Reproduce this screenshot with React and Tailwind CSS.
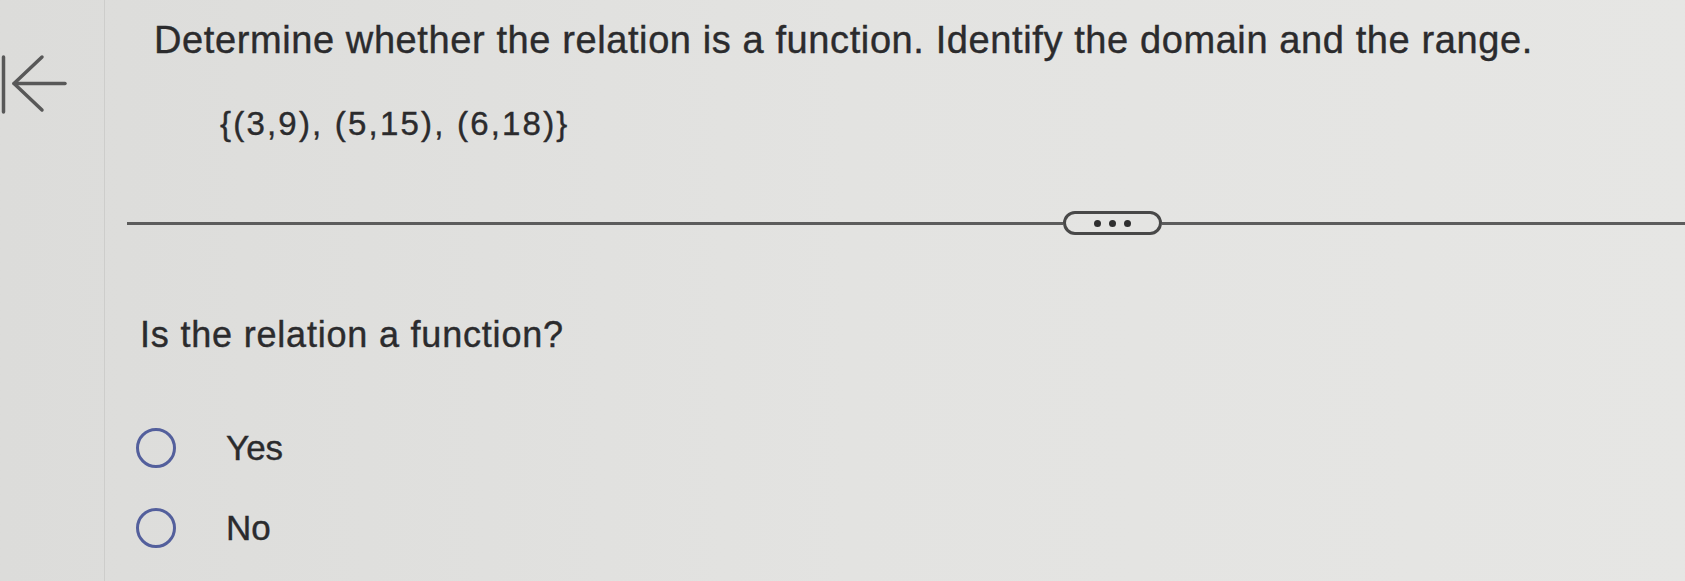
import React from "react"

function BackIcon() {
  return (
    <svg width="70" height="60" viewBox="0 0 70 60" fill="none" stroke="#585858" strokeWidth="3.5" strokeLinecap="round">
      {/* bar */}
      <line x1="3.5" y1="3" x2="3.5" y2="58" />
      {/* arrow */}
      <line x1="14" y1="29.5" x2="65" y2="29.5" />
      <polyline points="42,3 14,29.5 42,56" strokeLinejoin="round" />
    </svg>
  )
}

function Radio({ label }) {
  return (
    <div className="flex items-center h-[40px] -ml-[4px] gap-[50px]">
      <span className="w-[40px] h-[40px] rounded-full border-[3.5px] border-[#535f9c] shrink-0" />
      <span className="text-[35px] leading-[40px] [-webkit-text-stroke:0.4px_#2b2b2d]">{label}</span>
    </div>
  )
}

export default function App() {
  return (
    <div
      className="w-full h-[581px] flex overflow-hidden bg-linear-to-r from-[#dcdcda] via-[#e3e3e1] to-[#e6e6e4] text-[#2b2b2d]"
      style={{ fontFamily: '"Liberation Sans", Arial, sans-serif' }}
    >
      {/* Left rail */}
      <div className="w-[105px] shrink-0 border-r border-[#cdcdcb] pt-[54px]">
        <BackIcon />
      </div>

      {/* Question */}
      <div className="flex-1 flex flex-col pt-[20px] pl-[35px]">
        <h1 className="ml-[14px] text-[38px] leading-[40px] tracking-[0.6px] whitespace-nowrap font-normal [-webkit-text-stroke:0.4px_#2b2b2d]">
          Determine whether the relation is a function. Identify the domain and the range.
        </h1>

        <p className="mt-[44px] ml-[80px] text-[33px] leading-[40px] tracking-[2.2px] whitespace-nowrap [-webkit-text-stroke:0.4px_#2b2b2d]">
          {"{(3,9), (5,15), (6,18)}"}
        </p>

        {/* Divider with expand button */}
        <div className="mt-[67px] -ml-[13px] h-[24px] flex items-center">
          <div className="w-[936px] h-[3px] bg-[#5c5c5c]" />
          <button className="w-[99px] h-[24px] shrink-0 border-[3px] border-[#484848] rounded-full flex items-center justify-center gap-[8px]">
            <span className="w-[7px] h-[7px] rounded-full bg-[#2f2f2f]" />
            <span className="w-[7px] h-[7px] rounded-full bg-[#2f2f2f]" />
            <span className="w-[7px] h-[7px] rounded-full bg-[#2f2f2f]" />
          </button>
          <div className="flex-1 h-[3px] bg-[#5c5c5c]" />
        </div>

        <p className="mt-[80px] text-[36px] leading-[40px] tracking-[0.8px] whitespace-nowrap [-webkit-text-stroke:0.4px_#2b2b2d]">
          Is the relation a function?
        </p>

        <div className="mt-[73px] flex flex-col gap-[40px]">
          <Radio label="Yes" />
          <Radio label="No" />
        </div>
      </div>
    </div>
  )
}
